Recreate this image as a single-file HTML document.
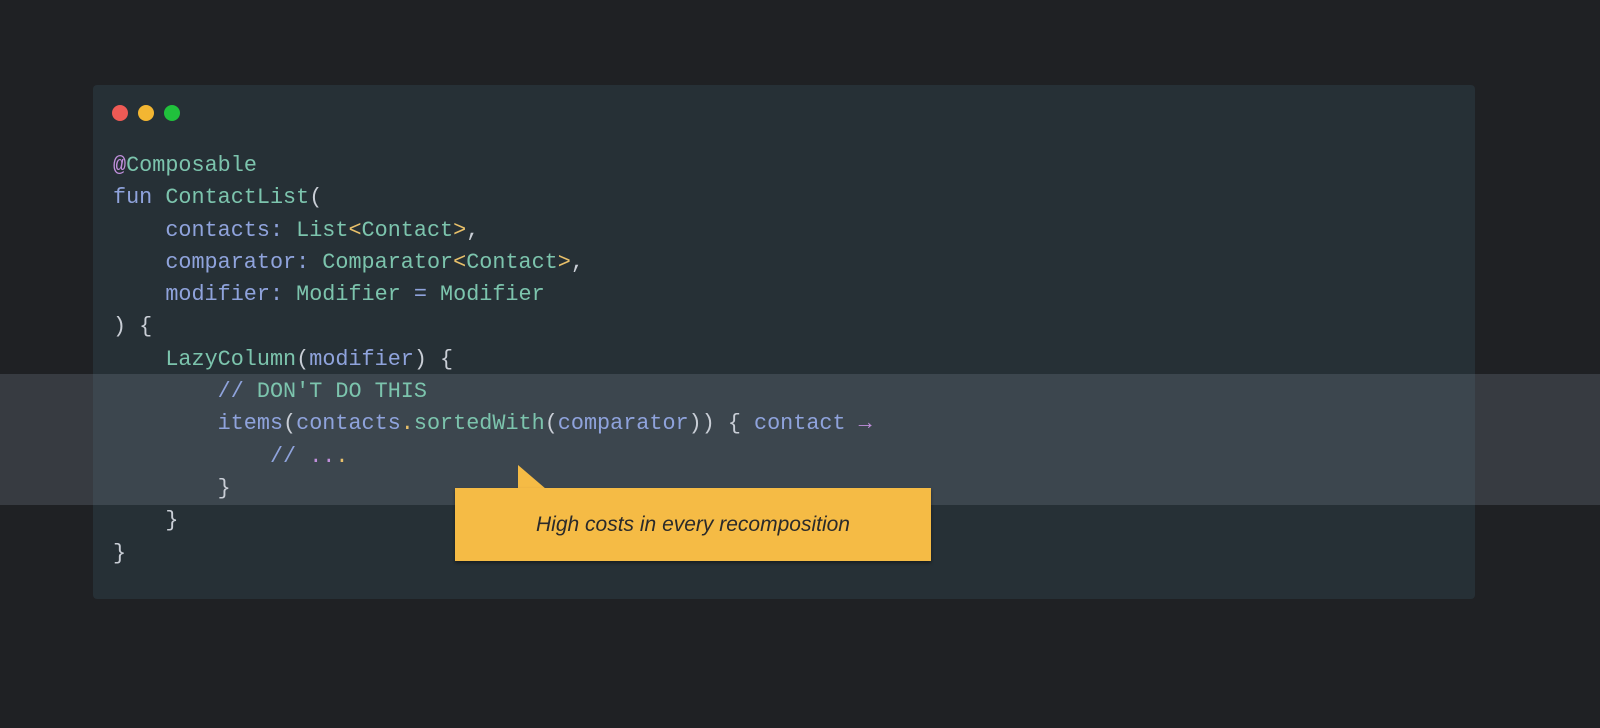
<!DOCTYPE html><html><head><style>
body{margin:0;width:1600px;height:728px;background:#1f2124;overflow:hidden;position:relative;font-family:"Liberation Mono",monospace}
.card{position:absolute;left:93px;top:85px;width:1382px;height:514px;background:#263036;border-radius:4px}
.d{position:absolute;top:105px;width:16px;height:16px;border-radius:50%}
.band{position:absolute;left:0;top:374px;width:1600px;height:131px;background:rgba(120,130,140,0.28)}
pre{position:absolute;left:113px;top:150px;margin:0;font-size:21.8px;line-height:32.3px;color:#8fa3dc;font-family:"Liberation Mono",monospace}
.t{color:#7cc4ad}.y{color:#e8c06a}.p{color:#c08fdc}.w{color:#c9ced6}
.call{position:absolute;left:455px;top:488px;width:476px;height:73px;background:#f5bb45;box-shadow:0 2px 3px rgba(0,0,0,.4);font-family:"Liberation Sans",sans-serif;font-style:italic;font-size:21px;color:#2a2a2a;text-align:center;line-height:73px}
.tri{position:absolute;left:518px;top:465px;width:0;height:0;border-left:0 solid transparent;border-right:28px solid transparent;border-bottom:24px solid #f5bb45}
</style></head><body>
<div class="card"></div>
<div class="d" style="left:112px;background:#ee5a55"></div>
<div class="d" style="left:138px;background:#f3b632"></div>
<div class="d" style="left:164px;background:#20c13c"></div>
<div class="band"></div>
<pre><span class="p">@</span><span class="t">Composable</span>
fun <span class="t">ContactList</span><span class="w">(</span>
    contacts: <span class="t">List</span><span class="y">&lt;</span><span class="t">Contact</span><span class="y">&gt;</span><span class="w">,</span>
    comparator: <span class="t">Comparator</span><span class="y">&lt;</span><span class="t">Contact</span><span class="y">&gt;</span><span class="w">,</span>
    modifier: <span class="t">Modifier</span> = <span class="t">Modifier</span>
<span class="w">) {</span>
    <span class="t">LazyColumn</span><span class="w">(</span>modifier<span class="w">) {</span>
        // <span class="t">DON'T DO THIS</span>
        items<span class="w">(</span>contacts<span class="y">.</span><span class="t">sortedWith</span><span class="w">(</span>comparator<span class="w">)) {</span> contact <span class="p">→</span>
            // <span class="p">..</span><span class="y">.</span>
        <span class="w">}</span>
    <span class="w">}</span>
<span class="w">}</span></pre>
<div class="tri"></div>
<div class="call">High costs in every recomposition</div>
</body></html>
